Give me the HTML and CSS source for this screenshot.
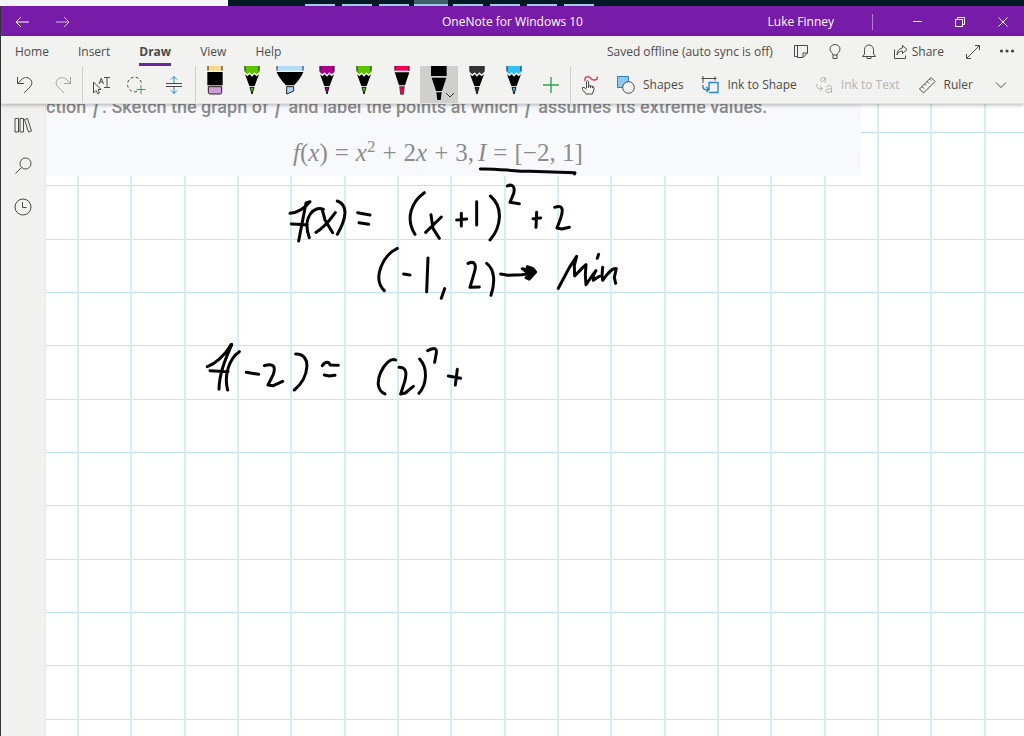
FILE: index.html
```html
<!DOCTYPE html>
<html lang="en">
<head>
<meta charset="utf-8">
<title>OneNote for Windows 10</title>
<link rel="stylesheet" href="styles.css">
</head>
<body>
<svg class="defs" width="0" height="0" aria-hidden="true">
  <symbol id="pencil" viewBox="0 0 72 108">
    <path fill="currentColor" d="M14 0H58V18L50 25L43 19L36 26L29 19L22 25L14 18Z"/>
    <path d="M15 0V16M57 0V16" stroke="#222" stroke-width="3"/>
    <path fill="#000" d="M15 25L22 31L29 25L36 32L43 25L50 31L57 25L44 60H28Z"/>
    <path fill="currentColor" stroke="#111" stroke-width="3" d="M30 64H42L36 84Z"/>
  </symbol>
  <symbol id="marker" viewBox="0 0 72 108">
    <path fill="currentColor" d="M14 0H58V14H14Z"/>
    <path d="M15 0V14M57 0V14" stroke="#222" stroke-width="3"/>
    <path fill="#000" d="M14 19H58L45 58H27Z"/>
    <path fill="currentColor" stroke="#222" stroke-width="2" d="M29 62H43L40 85H32Z"/>
  </symbol>
</svg>
<div class="desktop">
  <div class="desktop-light"></div>
  <div class="taskbar"><i></i><i></i><i></i><i class="lit"></i><i></i><i></i><i></i><i></i></div>
</div>
<div class="window">
  <header class="titlebar">
    <div class="nav">
      <button aria-label="Back"><svg width="16" height="12" viewBox="0 0 16 12"><path d="M15 6H2M7 1L2 6L7 11"/></svg></button>
      <button class="dim" aria-label="Forward"><svg width="16" height="12" viewBox="0 0 16 12"><path d="M1 6H14M9 1L14 6L9 11"/></svg></button>
    </div>
    <div class="title">OneNote for Windows 10</div>
    <div class="account">
      <span class="user">Luke Finney</span>
      <button aria-label="Minimize"><svg width="12" height="12" viewBox="0 0 12 12"><path d="M2 5.5H11"/></svg></button>
      <button aria-label="Restore"><svg width="12" height="12" viewBox="0 0 12 12"><path d="M1.500 3.500H8.500V10.500H1.500ZM3.500 3V1.500H10.500V8.500H9"/></svg></button>
      <button aria-label="Close"><svg width="12" height="12" viewBox="0 0 12 12"><path d="M1.500 1.500L10.500 10.500M10.500 1.500L1.500 10.500"/></svg></button>
    </div>
  </header>
  <div class="ribbon">
    <div class="menu">
      <nav class="tabs">
        <button>Home</button><button>Insert</button><button class="active">Draw</button><button>View</button><button>Help</button>
      </nav>
      <div class="status">
        <span class="saved">Saved offline (auto sync is off)</span>
        <button class="ic" aria-label="Feed"><svg width="16" height="16" viewBox="0 0 16 16"><path d="M4.500 12.500H1.500V1.500H14.500V9L10 13.500H4.500V1.500M14.500 9H10V13.500"/></svg></button>
        <button class="ic" aria-label="Tell me"><svg width="16" height="16" viewBox="0 0 16 16"><path d="M6 11C6 9 3 8 3 5A5 4.500 0 0 1 13 5C13 8 10 9 10 11V14.500H6V11H10"/></svg></button>
        <button class="ic" aria-label="Notifications"><svg width="16" height="16" viewBox="0 0 16 16"><path d="M1.500 12.500H14.500L12.500 10V5.500A4.500 4.500 0 0 0 3.500 5.500V10ZM6 13V14.500H10V13"/></svg></button>
        <button class="share"><svg width="16" height="16" viewBox="0 0 16 16"><path d="M1.500 5.500V14.500H12.500V11.500M9.500 1.500L14 5.500L9.500 9.500V7C6.500 7 5 8.500 4 11C4 7 6 4.500 9.500 4Z"/></svg>Share</button>
        <button class="ic" aria-label="Full screen"><svg width="16" height="16" viewBox="0 0 16 16"><path d="M2 14L14.500 1.500M10 1.500H14.500V6M1.500 10V14.500H6"/></svg></button>
        <button class="ic" aria-label="More"><svg width="16" height="16" viewBox="0 0 16 16"><g class="dots"><circle cx="2.500" cy="7" r="1.600"/><circle cx="8" cy="7" r="1.600"/><circle cx="13.500" cy="7" r="1.600"/></g></svg></button>
      </div>
    </div>
    <div class="tools">
      <div class="group history">
        <button aria-label="Undo"><svg width="20" height="20" viewBox="0 0 20 20"><path d="M2.500 2V8.500H9M2.500 8.500L7 4.200C10 1.500 14 2.500 16 5C17.500 7.500 17 10 15 12L9 18"/></svg></button>
        <button class="faded" aria-label="Redo"><svg width="20" height="20" viewBox="0 0 20 20"><path d="M17.500 2V8.500H11M17.500 8.500L13 4.200C10 1.500 6 2.500 4 5C2.500 7.500 3 10 5 12L11 18"/></svg></button>
      </div>
      <div class="group select">
        <button aria-label="Select objects or type"><svg width="20" height="20" viewBox="0 0 20 20"><path d="M2.500 7V18L5 15.500L7 19L8.500 18L7 14.500H10ZM8 9L10.300 3L12.500 9M9 7H12M13 2.500H19M16 2.500V12.500M13 12.500H19"/></svg></button>
        <button aria-label="Lasso select"><svg width="20" height="20" viewBox="0 0 20 20"><path stroke-dasharray="3 2.200" d="M10 16.300A7 7.300 0 1 1 14.500 9"/><path class="green" d="M9.500 14.500H18.500M14 10V19"/></svg></button>
        <button aria-label="Insert or remove space"><svg width="20" height="20" viewBox="0 0 20 20"><path d="M2 8.500H18M2 11.500H18"/><path class="blue" d="M10 8V1.500M7 4.500L10 1.500L13 4.500M10 12V18.500M7 15.500L10 18.500L13 15.500"/></svg></button>
      </div>
      <div class="group pens">
        <button aria-label="Eraser"><svg width="24" height="36" viewBox="0 0 72 108"><path fill="#f7d98b" d="M14 0H58V14H14Z"/><path d="M15 0V14M57 0V14" stroke="#222" stroke-width="3"/><path fill="#000" d="M13 18H59V58H13Z"/><path fill="#d59bd8" stroke="#222" stroke-width="3" d="M16 62H56V79Q56 84 50 84H22Q16 84 16 79Z"/></svg></button>
        <button class="lime" aria-label="Green pencil"><svg width="24" height="36"><use href="#pencil"/></svg></button>
        <button aria-label="Highlighter"><svg width="28" height="36" viewBox="0 0 84 108"><path fill="#b0dcfa" d="M3 0H81V14H3Z"/><path d="M3 0V14M81 0V14" stroke="#222" stroke-width="3"/><path fill="#000" d="M2 18H82Q76 35 54 58H30Q8 35 2 18Z"/><path fill="#b0d5fa" stroke="#222" stroke-width="3" d="M32 62H53V75L32 84Z"/></svg></button>
        <button class="plum" aria-label="Purple pencil"><svg width="24" height="36"><use href="#pencil"/></svg></button>
        <button class="lime" aria-label="Light green pencil"><svg width="24" height="36"><use href="#pencil"/></svg></button>
        <button class="rose" aria-label="Red pen"><svg width="24" height="36"><use href="#marker"/></svg></button>
        <button class="current" aria-label="Black pen"><svg width="24" height="36" viewBox="0 0 72 108"><path fill="#000" d="M12 0H59V30H12ZM14 35H58L45 75H27ZM28 79H44L41 102H31Z"/></svg><svg class="caret" width="10" height="6" viewBox="0 0 10 6"><path d="M1 1L5 5L9 1"/></svg></button>
        <button class="coal" aria-label="Gray pencil"><svg width="24" height="36"><use href="#pencil"/></svg></button>
        <button class="sky" aria-label="Blue pencil"><svg width="24" height="36"><use href="#pencil"/></svg></button>
        <button class="add" aria-label="Add pen"><svg width="18" height="18" viewBox="0 0 18 18"><path stroke-width="1.400" d="M1 9H17M9 1V17"/></svg></button>
      </div>
      <button class="touch" aria-label="Draw with mouse or touch"><svg width="20" height="20" viewBox="0 0 20 20"><path class="red" stroke-width="1.400" d="M5 6C4 1 9 1 11 3.500C13 6 19 5 17 1.500"/><path d="M6.500 13V6.500Q7.500 4.500 8.500 6.500V10.500L13 11.500Q14.500 12 14 14L12.500 19H6L2.500 14.500Q1.500 11.500 4 12.500L6.500 14M8.500 10.500V13M10.500 11V13M12.500 11.500V13"/></svg></button>
      <button class="labelled"><svg width="18" height="20" viewBox="0 0 18 20"><path fill="#8fc7ef" stroke="#2b7fc0" d="M.5 1.500H11.500V12.500H.5Z"/><circle cx="11.500" cy="12.500" r="5.800" fill="#f3f2f1"/></svg>Shapes</button>
      <button class="labelled"><svg width="18" height="20" viewBox="0 0 18 20"><path d="M2 3.500H14M2 1V8M14 1.500V5.500M.5 3.500H3.500M12.500 3.500H15.500"/><path class="blue" stroke-width="1.400" d="M8 14V7.500H17V17.500H8M2 10Q1 16 8 14.500M5 12L8 14.500L5.500 17"/></svg>Ink to Shape</button>
      <button class="labelled disabled" disabled><svg width="18" height="20" viewBox="0 0 18 20"><path d="M10 3Q5.500 1.500 5.500 5.500Q6 8.500 10 4L10.500 2.500L10 7.500M2 9Q0 14 7 13.500M5 11L7.500 13.500L5 16M11.500 11.500Q16.500 9 16.500 12.500V18M16.500 14Q10.500 13.500 11 16.500Q12.500 19 16.500 16"/></svg>Ink to Text</button>
      <button class="labelled"><svg width="18" height="20" viewBox="0 0 18 20"><path d="M1.500 14L13 2.500L17 6.500L5.500 18ZM4 11.500L6 13.500M6.500 9L8 10.500M9 6.500L11 8.500M11.500 4L13 5.500"/></svg>Ruler</button>
      <button class="more" aria-label="More tools"><svg width="12" height="8" viewBox="0 0 12 8"><path d="M1 1.500L6 6.500L11 1.500"/></svg></button>
    </div>
  </div>
  <div class="body">
    <aside class="sidebar">
      <button aria-label="Notebooks"><svg width="20" height="20" viewBox="0 0 20 20"><path d="M2 3.500H5.500V17H2ZM7 3.500H10.500V17H7ZM11.500 4.500L14.500 3.500L18.500 16L15.500 17Z"/></svg></button>
      <button aria-label="Search"><svg width="20" height="20" viewBox="0 0 20 20"><circle cx="12.500" cy="7.500" r="5.500"/><path d="M8.500 11.500L2.500 17.500"/></svg></button>
      <button aria-label="Recent notes"><svg width="20" height="20" viewBox="0 0 20 20"><circle cx="10" cy="10" r="8"/><path d="M9.500 5V10.500H13.500"/></svg></button>
    </aside>
    <main class="canvas">
      <section class="problem">
        <p class="prompt">ction <var>f</var>. Sketch the graph of <var>f</var> and label the points at which <var>f</var> assumes its extreme values.</p>
        <p class="formula"><span><var>f</var>(<var>x</var>)</span><span>=</span><span><var>x</var><sup>2</sup></span><span>+</span><span>2<var>x</var></span><span>+</span><span>3,</span><span class="near"><var>I</var></span><span>=</span><span>[−2, 1]</span></p>
      </section>
      <svg class="ink" width="978" height="632" viewBox="46 104 978 632" role="img" aria-label="Handwritten solution">
        <g transform="translate(280 95) scale(.3333)"><path d="M601 222C650 220 700 229 750 229L885 233L884 237"/></g>
        <g transform="translate(280 175) scale(.3333)"><path d="M30 115C50 114 75 100 90 80L78 84L56 198M34 147L82 149M130 103C105 90 65 125 88 188M127 105L135 135L158 173M166 113C150 135 130 160 108 172M172 78C205 90 200 130 172 178M233 113L270 120M237 143L266 148M433 53C395 80 375 130 405 178M453 119L459 160L478 190M484 126L437 172M352 220C310 240 275 310 313 347M371 297L390 300M444 249L440 351M494 341L484 370"/></g>
        <g transform="translate(440 175) scale(.3333)"><path d="M50 135L80 132M64 115V153M110 80V150M151 63C190 95 185 155 150 195M202 33C218 25 226 37 221 55L210 82L238 86M279 131L302 129M290 112L288 157M344 97C370 88 370 105 362 130L351 159L366 162L388 157M84 265C105 256 110 270 103 292L90 337L118 336M140 265C166 285 165 325 153 361M182 297L203 301L245 299L275 295M355 340L388 278L410 244L403 272L404 303L428 278L438 269L436 300L438 329M438 329L458 300L468 287L461 300L460 316L478 304M476 238L472 250M488 277L486 302L488 316C500 300 515 278 529 281L523 307L527 325"/><path class="solid" d="M247 281L264 285L262 275L279 281L287 291L268 312L258 308L270 299Z"/></g>
        <g transform="translate(200 335) scale(.3333)"><path d="M22 95C50 85 75 58 95 29C80 65 58 110 57 163M30 107L84 110M118 50C88 70 71 120 83 165M139 112L176 118M193 92C220 84 228 93 220 118L204 150L220 152L248 139M287 57C335 55 330 125 283 165M367 92C377 78 386 80 391 90L415 91M373 120L388 123L405 121M587 75C560 60 505 155 555 177M597 97C620 97 621 115 614 140L602 177L616 174L640 154M659 72C685 100 680 150 657 175M683 47C705 36 713 39 708 60L704 82M745 123L782 130M772 103L766 150"/><path d="M82 50L94 29"  stroke-width="11"/></g>
      </svg>
    </main>
  </div>
</div>
</body>
</html>
```
FILE: styles.css
```css
* { box-sizing: border-box; }
body {
  margin: 0;
  height: 100vh;
  display: flex;
  flex-direction: column;
  overflow: hidden;
  font-family: "Open Sans", "Noto Sans", sans-serif;
  font-size: 12px;
  line-height: 16px;
  color: #4b4b4b;
}
button {
  display: flex;
  align-items: center;
  justify-content: center;
  padding: 0;
  border: 0;
  background: none;
  font: inherit;
  color: inherit;
  white-space: nowrap;
}
svg { display: block; flex: none; fill: none; stroke: currentColor; }
.defs { position: absolute; }
symbol, .pens svg { stroke: none; }

.desktop { display: flex; flex: none; height: 6px; background: #001923; }
.desktop-light { width: 228px; background: #f3f4f5; }
.taskbar { display: flex; gap: 7px; padding-left: 77px; }
.taskbar i { width: 30px; border-bottom: 2px solid #9fcce4; }
.taskbar .lit { width: 34px; margin: 0 -2px; background: #42606b; }

.window { flex: 1; min-height: 0; display: flex; flex-direction: column; border-left: 1px solid #39343b; background: #f2f2f0; }
.titlebar {
  display: grid;
  grid-template-columns: 1fr auto 1fr;
  align-items: center;
  height: 30px;
  flex: none;
  padding-top: 1px;
  background: #771ba9;
  color: #fff;
}
.nav { display: flex; }
.nav button { width: 41px; height: 28px; }
.nav .dim { opacity: .7; }
.account { display: flex; align-items: center; justify-content: flex-end; }
.user { padding-right: 38px; margin-right: 22px; border-right: 1px solid #b47fd0; }
.account button { width: 43px; height: 29px; }

.ribbon { flex: none; position: relative; z-index: 1; border-bottom: 1px solid #e3e3e1; box-shadow: 0 1px 4px rgba(0, 0, 0, .3); background: #f2f2f0; }
.menu { display: flex; justify-content: space-between; height: 30px; }
.tabs, .status { display: flex; align-items: stretch; }
.status { padding-top: 1px; }
.tabs { gap: 29px; padding-left: 14px; }
.tabs button { border-bottom: 3px solid transparent; border-top: 4px solid transparent; }
.tabs .active { font-weight: 700; border-bottom-color: #6b259f; }
.saved { align-self: center; margin-right: 11px; }
.ic { width: 34px; }
.share { gap: 3px; padding: 0 12px 0 7px; }
.dots { fill: #444; stroke: none; }

.tools { display: flex; height: 37px; }
.group { display: flex; border-right: 1px solid #cfcfcd; }
.group button { flex: 1; }
.history { width: 82px; padding-left: 5px; }
.select { width: 113px; padding-right: 3px; }
.pens { width: 375px; }
.pens button { align-items: flex-start; }
.pens .add { align-items: center; color: #35a456; }
.pens .add svg, .pens .caret { stroke: currentColor; }
.pens .current { position: relative; background: #cfcfcd; }
.caret { position: absolute; right: 3px; bottom: 5px; color: #333; }
.lime { color: #5cc300; }
.plum { color: #a7008b; }
.rose { color: #f00058; }
.coal { color: #333; }
.sky { color: #32c0fa; }
.faded { color: #a5a5a5; }
.green { stroke: #35a456; }
.blue { stroke: #2689cc; }
.red { stroke: #dc3a54; }
.group, .touch, .labelled, .more { flex: none; }
.touch { width: 37px; }
.labelled { gap: 8px; padding: 0 9px; }
.disabled { color: #b5b5b5; }
.more { flex: 0 1 38px; }

.body { flex: 1; min-height: 0; display: flex; }
.sidebar { flex: none; width: 45px; border-right: 1px solid #e8e8e6; background: #f1f1ef; }
.sidebar button { width: 44px; height: 41px; }
.canvas {
  flex: 1;
  position: relative;
  overflow: hidden;
  background-color: #fff;
  background-image:
    linear-gradient(90deg, transparent 31px, #d3eef6 31px 33px, transparent 33px 84px, #d3eef6 84px 86px, transparent 86px 138px, #d3eef6 138px 140px, transparent 140px),
    linear-gradient(transparent 28px, #bfe6ee 28px 29px, transparent 29px 81px, #bfe6ee 81px 82px, transparent 82px 135px, #bfe6ee 135px 136px, transparent 136px);
  background-size: 160px 160px;
}
.problem { display: flow-root; width: fit-content; padding-right: 94px; height: 72px; background: #f8f9fd; color: #8c8c8c; }
.prompt { margin: -9px 0 0; font: 500 18px/24px Roboto, sans-serif; white-space: nowrap; }
.prompt var { margin: 0 2px; font: italic 26px/20px "Liberation Serif", serif; }
.formula { display: flex; gap: 7px; margin: 19px 0 0 247px; font: 25px/30px "Liberation Serif", serif; white-space: nowrap; }
.formula .near { margin-left: -3px; }
.formula sup { font-size: 17px; line-height: 0; }
.ink { position: absolute; left: 0; top: 0; stroke: #050505; stroke-width: 9; stroke-linecap: round; stroke-linejoin: round; }
.solid { fill: #050505; }
```
